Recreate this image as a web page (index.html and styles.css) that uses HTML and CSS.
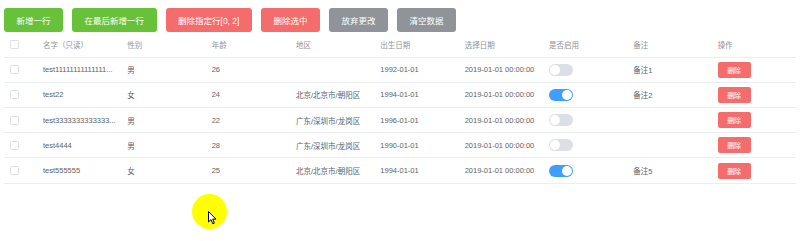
FILE: index.html
```html
<!DOCTYPE html>
<html lang="zh-CN">
<head>
    <meta charset="UTF-8">
    <title>可编辑表格</title>
    <link rel="stylesheet" href="styles.css">
</head>
<body>
    <div class="page">
        <div class="toolbar">
            <button class="btn btn-success">新增一行</button>
            <button class="btn btn-success">在最后新增一行</button>
            <button class="btn btn-danger">删除指定行[0, 2]</button>
            <button class="btn btn-danger">删除选中</button>
            <button class="btn btn-info">放弃更改</button>
            <button class="btn btn-info">清空数据</button>
        </div>

        <table class="grid">
            <colgroup>
                <col class="col-check">
                <col span="9">
            </colgroup>
            <thead>
                <tr>
                    <th><span class="checkbox"></span></th>
                    <th>名字（只读）</th>
                    <th>性别</th>
                    <th>年龄</th>
                    <th>地区</th>
                    <th>出生日期</th>
                    <th>选择日期</th>
                    <th>是否启用</th>
                    <th>备注</th>
                    <th>操作</th>
                </tr>
            </thead>
            <tbody>
                <tr>
                    <td><span class="checkbox"></span></td>
                    <td>test11111111111111...</td>
                    <td>男</td>
                    <td>26</td>
                    <td></td>
                    <td>1992-01-01</td>
                    <td>2019-01-01 00:00:00</td>
                    <td><span class="switch"></span></td>
                    <td>备注1</td>
                    <td><button class="btn-del">删除</button></td>
                </tr>
                <tr>
                    <td><span class="checkbox"></span></td>
                    <td>test22</td>
                    <td>女</td>
                    <td>24</td>
                    <td>北京/北京市/朝阳区</td>
                    <td>1994-01-01</td>
                    <td>2019-01-01 00:00:00</td>
                    <td><span class="switch on"></span></td>
                    <td>备注2</td>
                    <td><button class="btn-del">删除</button></td>
                </tr>
                <tr>
                    <td><span class="checkbox"></span></td>
                    <td>test3333333333333...</td>
                    <td>男</td>
                    <td>22</td>
                    <td>广东/深圳市/龙岗区</td>
                    <td>1996-01-01</td>
                    <td>2019-01-01 00:00:00</td>
                    <td><span class="switch"></span></td>
                    <td></td>
                    <td><button class="btn-del">删除</button></td>
                </tr>
                <tr>
                    <td><span class="checkbox"></span></td>
                    <td>test4444</td>
                    <td>男</td>
                    <td>28</td>
                    <td>广东/深圳市/龙岗区</td>
                    <td>1990-01-01</td>
                    <td>2019-01-01 00:00:00</td>
                    <td><span class="switch"></span></td>
                    <td></td>
                    <td><button class="btn-del">删除</button></td>
                </tr>
                <tr>
                    <td><span class="checkbox"></span></td>
                    <td>test555555</td>
                    <td>女</td>
                    <td>25</td>
                    <td>北京/北京市/朝阳区</td>
                    <td>1994-01-01</td>
                    <td>2019-01-01 00:00:00</td>
                    <td><span class="switch on"></span></td>
                    <td>备注5</td>
                    <td><button class="btn-del">删除</button></td>
                </tr>
            </tbody>
        </table>
    </div>

    <!-- click highlight from the screen recorder -->
    <div class="click-spot">
        <svg class="cursor" width="9" height="14" viewBox="0 0 9 14">
            <path d="M0.5 0.5 L0.5 11 L3 8.6 L4.8 12.8 L6.4 12.1 L4.7 8.1 L8 8.1 Z" fill="#fff" stroke="#000" stroke-width="1" stroke-linejoin="round"/>
        </svg>
    </div>
</body>
</html>
```

FILE: styles.css
```css
* {
    margin: 0;
    padding: 0;
    box-sizing: border-box;
    font-family: 'Liberation Sans', 'Noto Sans CJK SC', sans-serif;
}

body {
    width: 800px;
    height: 241px;
    background: #fff;
    overflow: hidden;
    position: relative;
}

.page {
    padding: 8px 4px 0 4px;
}

.toolbar {
    display: flex;
    gap: 9px;
}

.btn {
    height: 24px;
    padding: 0 12.5px;
    border: none;
    border-radius: 3px;
    color: #fff;
    font-size: 8.5px;
    white-space: nowrap;
    cursor: pointer;
}

.btn-success {
    background: #67c23a;
}

.btn-danger {
    background: #f56c6c;
}

.btn-info {
    background: #909399;
}

.grid {
    width: 792px;
    border-collapse: collapse;
    table-layout: fixed;
}

.col-check {
    width: 33px;
}

.grid th,
.grid td {
    height: 25.2px;
    padding: 0 6px;
    border-bottom: 1px solid #ebeef5;
    text-align: left;
    vertical-align: middle;
    font-size: 7.5px;
    font-weight: normal;
    color: #606266;
    white-space: nowrap;
}

.grid th {
    color: #909399;
}

.checkbox {
    display: block;
    width: 9px;
    height: 9px;
    border: 1px solid #dcdfe6;
    border-radius: 1.5px;
    background: #fff;
}

.switch {
    display: block;
    position: relative;
    width: 24px;
    height: 12px;
    border-radius: 6px;
    background: #dcdfe6;
}

.switch::after {
    content: '';
    position: absolute;
    top: 1px;
    left: 1px;
    width: 10px;
    height: 10px;
    border-radius: 50%;
    background: #fff;
}

.switch.on {
    background: #409eff;
}

.switch.on::after {
    left: 13px;
}

.btn-del {
    display: block;
    width: 33px;
    height: 16px;
    border: none;
    border-radius: 2px;
    background: #f56c6c;
    color: #fff;
    font-size: 7px;
    cursor: pointer;
}

.click-spot {
    position: absolute;
    left: 192px;
    top: 194px;
    width: 35px;
    height: 35px;
    border-radius: 50%;
    background: #ffff00;
}

.cursor {
    position: absolute;
    left: 16px;
    top: 17px;
}
```
